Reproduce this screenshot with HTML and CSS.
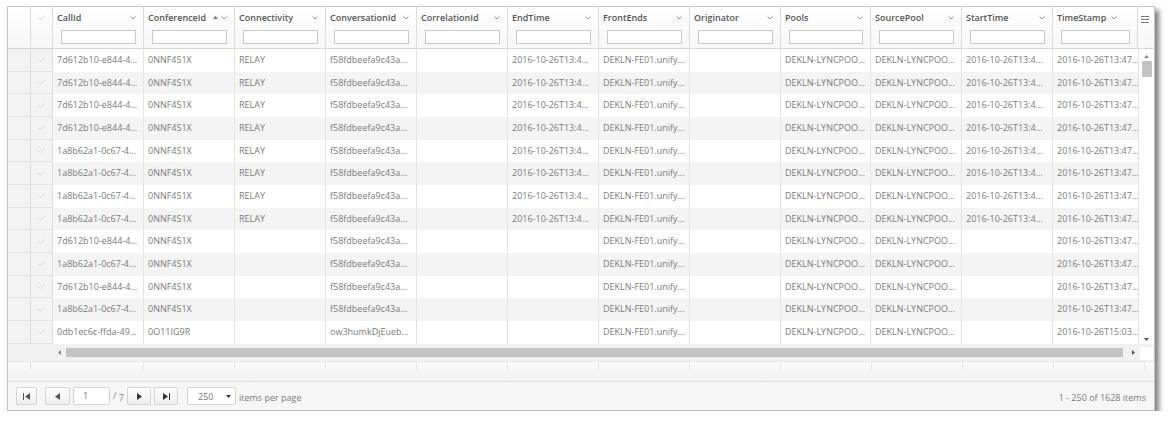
FILE: index.html
```html
<!DOCTYPE html>
<html>
    <head>
        <meta charset="UTF-8">
        <title>Calls</title>
        <link rel="stylesheet" href="styles.css">
    </head>
    <body>
        <div class="grid">
            <div class="head">
                <div class="lock1"></div>
                <div class="lock2">
                    <svg class="check" width="7" height="5" viewBox="0 0 7 5"><path d="M.5 2.5 2.5 4.5 6.5 .5" fill="none" stroke="#d2d2d2"/></svg>
                </div>
                <div class="hcol"><div class="title"><span>CallId</span><svg class="chev" width="6" height="4" viewBox="0 0 6 4"><path d="M.5 .5 3 3 5.5 .5" fill="none" stroke="#999"/></svg></div><div class="filter"><input type="text"></div></div>
                <div class="hcol"><div class="title"><span>ConferenceId</span><span class="tools"><svg class="sort" width="5" height="3" viewBox="0 0 5 3"><path d="M0 3 2.5 0 5 3z" fill="#777"/></svg><svg class="chev" width="6" height="4" viewBox="0 0 6 4"><path d="M.5 .5 3 3 5.5 .5" fill="none" stroke="#999"/></svg></span></div><div class="filter"><input type="text"></div></div>
                <div class="hcol"><div class="title"><span>Connectivity</span><svg class="chev" width="6" height="4" viewBox="0 0 6 4"><path d="M.5 .5 3 3 5.5 .5" fill="none" stroke="#999"/></svg></div><div class="filter"><input type="text"></div></div>
                <div class="hcol"><div class="title"><span>ConversationId</span><svg class="chev" width="6" height="4" viewBox="0 0 6 4"><path d="M.5 .5 3 3 5.5 .5" fill="none" stroke="#999"/></svg></div><div class="filter"><input type="text"></div></div>
                <div class="hcol"><div class="title"><span>CorrelationId</span><svg class="chev" width="6" height="4" viewBox="0 0 6 4"><path d="M.5 .5 3 3 5.5 .5" fill="none" stroke="#999"/></svg></div><div class="filter"><input type="text"></div></div>
                <div class="hcol"><div class="title"><span>EndTime</span><svg class="chev" width="6" height="4" viewBox="0 0 6 4"><path d="M.5 .5 3 3 5.5 .5" fill="none" stroke="#999"/></svg></div><div class="filter"><input type="text"></div></div>
                <div class="hcol"><div class="title"><span>FrontEnds</span><svg class="chev" width="6" height="4" viewBox="0 0 6 4"><path d="M.5 .5 3 3 5.5 .5" fill="none" stroke="#999"/></svg></div><div class="filter"><input type="text"></div></div>
                <div class="hcol"><div class="title"><span>Originator</span><svg class="chev" width="6" height="4" viewBox="0 0 6 4"><path d="M.5 .5 3 3 5.5 .5" fill="none" stroke="#999"/></svg></div><div class="filter"><input type="text"></div></div>
                <div class="hcol pools"><div class="title"><span>Pools</span><svg class="chev" width="6" height="4" viewBox="0 0 6 4"><path d="M.5 .5 3 3 5.5 .5" fill="none" stroke="#999"/></svg></div><div class="filter"><input type="text"></div></div>
                <div class="hcol"><div class="title"><span>SourcePool</span><svg class="chev" width="6" height="4" viewBox="0 0 6 4"><path d="M.5 .5 3 3 5.5 .5" fill="none" stroke="#999"/></svg></div><div class="filter"><input type="text"></div></div>
                <div class="hcol"><div class="title"><span>StartTime</span><svg class="chev" width="6" height="4" viewBox="0 0 6 4"><path d="M.5 .5 3 3 5.5 .5" fill="none" stroke="#999"/></svg></div><div class="filter"><input type="text"></div></div>
                <div class="hcol stamp"><div class="title inline"><span>TimeStamp</span><svg class="chev" width="6" height="4" viewBox="0 0 6 4"><path d="M.5 .5 3 3 5.5 .5" fill="none" stroke="#999"/></svg></div><div class="filter"><input type="text"></div></div>
                <div class="hmenu">
                    <svg width="8" height="7" viewBox="0 0 8 7"><path d="M0 .5h8M0 3.5h8M0 6.5h8" stroke="#777"/></svg>
                </div>
            </div>

            <div class="body">
                <div class="rows" id="rows"></div>
                <div class="vscroll">
                    <svg class="arr" width="5" height="3" viewBox="0 0 5 3"><path d="M0 3 2.5 0 5 3z" fill="#888"/></svg>
                    <div class="vthumb"></div>
                    <div class="vspace"></div>
                    <svg class="arr" width="5" height="3" viewBox="0 0 5 3"><path d="M0 0 2.5 3 5 0z" fill="#555"/></svg>
                </div>
            </div>

            <div class="hscroll">
                <div class="hlock"></div>
                <div class="htrack">
                    <svg class="arr" width="3" height="5" viewBox="0 0 3 5"><path d="M3 0 0 2.5 3 5z" fill="#888"/></svg>
                    <div class="hthumb"></div>
                    <svg class="arr" width="3" height="5" viewBox="0 0 3 5"><path d="M0 0 3 2.5 0 5z" fill="#555"/></svg>
                </div>
                <div class="corner"><div class="square"></div></div>
            </div>

            <div class="foot" id="foot"></div>

            <div class="pager">
                <span class="pbtn first"><svg width="7" height="7" viewBox="0 0 7 7"><path d="M.5 0v7" stroke="#555"/><path d="M7 0 2 3.5 7 7z" fill="#555"/></svg></span>
                <span class="pbtn prev"><svg width="5" height="7" viewBox="0 0 5 7"><path d="M5 0 0 3.5 5 7z" fill="#555"/></svg></span>
                <span class="pinput">1</span>
                <span class="pof">/ <sub>7</sub></span>
                <span class="pbtn next"><svg width="5" height="7" viewBox="0 0 5 7"><path d="M0 0 5 3.5 0 7z" fill="#333"/></svg></span>
                <span class="pbtn last"><svg width="7" height="7" viewBox="0 0 7 7"><path d="M0 0 5 3.5 0 7z" fill="#333"/><path d="M6.5 0v7" stroke="#333"/></svg></span>
                <span class="psize">250<svg width="5" height="3" viewBox="0 0 5 3"><path d="M0 0 2.5 3 5 0z" fill="#333"/></svg></span>
                <span class="plabel">items per page</span>
                <span class="pinfo">1 - 250 of 1628 items</span>
            </div>
        </div>

        <script type="text/javascript">
            var a = '7d612b10-e844-4…', b = '1a8b62a1-0c67-4…';
            var f = 'f58fdbeefa9c43a…', e = '2016-10-26T13:4…', fe = 'DEKLN-FE01.unify…';
            var p = 'DEKLN-LYNCPOO…', t = '2016-10-26T13:47…';

            function full(id) { return [id, '0NNF4S1X', 'RELAY', f, '', e, fe, '', p, p, e, t]; }
            function part(id) { return [id, '0NNF4S1X', '', f, '', '', fe, '', p, p, '', t]; }

            var data = [full(a), full(a), full(a), full(a), full(b), full(b), full(b), full(b),
                part(a), part(b), part(a), part(b),
                ['0db1ec6c-ffda-49…', '0O11IG9R', '', 'ow3humkDjEueb…', '', '', fe, '', p, p, '', '2016-10-26T15:03…']];

            var check = '<svg width="7" height="5" viewBox="0 0 7 5"><path d="M.5 2.5 2.5 4.5 6.5 .5" fill="none" stroke="#d2d2d2"/></svg>';
            var html = '';
            for (var i = 0; i < data.length; i++) {
                html += '<div class="row' + (i % 2 ? ' alt' : '') + '"><div class="lock1"></div><div class="lock2">' + check + '</div>';
                for (var j = 0; j < data[i].length; j++) {
                    var cls = j == 8 ? ' pools' : (j == 11 ? ' stamp' : '');
                    html += '<div class="cell' + cls + '">' + data[i][j] + '</div>';
                }
                html += '</div>';
            }
            document.getElementById('rows').innerHTML = html;

            var foot = '<div class="lock1"></div><div class="lock2"></div>';
            for (var k = 0; k < 12; k++) {
                foot += '<div class="cell' + (k == 8 ? ' pools' : (k == 11 ? ' stamp' : '')) + '"></div>';
            }
            document.getElementById('foot').innerHTML = foot;
        </script>
    </body>
</html>
```

FILE: styles.css
```css
*{
    box-sizing: border-box;
}
body{
    margin: 0;
    background: #fff;
    font-family: "Open Sans", "Liberation Sans", sans-serif;
    font-size: 9px;
    color: #7a7a7a;
}
.grid{
    margin: 6px 0 0 7px;
    width: 1148px;
    height: 405px;
    border: 1px solid #c4c4c4;
    box-shadow: 4px 4px 5px rgba(0,0,0,.5);
    display: flex;
    flex-direction: column;
    background: #fff;
    overflow: hidden;
}

/* header */
.head{
    display: flex;
    height: 42px;
    flex-shrink: 0;
    border-bottom: 1px solid #d6d6d6;
    background: linear-gradient(#fff, #f7f7f7);
}
.lock1{
    width: 23px;
    flex-shrink: 0;
    border-right: 1px solid #dcdcdc;
}
.lock2{
    width: 22px;
    flex-shrink: 0;
    border-right: 1px solid #dcdcdc;
    display: flex;
    justify-content: center;
}
.head .lock2{
    padding-top: 8px;
}
.hcol{
    width: 91px;
    flex-shrink: 0;
    border-right: 1px solid #dcdcdc;
    display: flex;
    flex-direction: column;
}
.pools{
    width: 90px;
}
.stamp{
    width: 85px;
}
.title{
    height: 20px;
    display: flex;
    align-items: center;
    justify-content: space-between;
    padding: 1px 7px 0 4px;
    font-weight: 600;
    color: #555;
    white-space: nowrap;
}
.title.inline{
    justify-content: flex-start;
}
.title.inline .chev{
    margin-left: 5px;
}
.tools{
    display: flex;
    align-items: center;
}
.sort{
    margin-right: 3px;
}
.filter{
    padding: 3px 7px 0 8px;
}
.filter input{
    display: block;
    width: 100%;
    height: 14px;
    margin: 0;
    padding: 0;
    border: 1px solid #c8c8c8;
    background: #fff;
}
.hmenu{
    width: 16px;
    flex-shrink: 0;
    padding: 6px 0 0 3px;
}

/* body */
.body{
    display: flex;
    height: 295px;
    flex-shrink: 0;
}
.rows{
    width: 1130px;
}
.row{
    display: flex;
    height: 22.67px;
    line-height: 22.67px;
    background: #fff;
}
.row.alt{
    background: #f4f4f4;
}
.row .lock1,
.row .lock2{
    background: #f3f3f3;
    border-bottom: 1px solid #e2e2e2;
}
.row .lock2{
    align-items: center;
}
.cell{
    width: 91px;
    flex-shrink: 0;
    padding-left: 4px;
    border-right: 1px solid #e4e4e4;
    white-space: nowrap;
    overflow: hidden;
}
.row .pools{
    width: 90px;
}
.row .stamp{
    width: 85px;
    border-right: 0;
}
.vscroll{
    width: 16px;
    flex-shrink: 0;
    display: flex;
    flex-direction: column;
    align-items: center;
    padding: 6px 0 3px;
    border-left: 1px solid #e4e4e4;
}
.vthumb{
    width: 10px;
    height: 16px;
    margin-top: 3px;
    margin-left: 1px;
    background: #c3c3c3;
}
.vspace{
    flex: 1;
}

/* horizontal scroll */
.hscroll{
    display: flex;
    height: 17px;
    flex-shrink: 0;
    background: #f1f1f1;
}
.hlock{
    width: 45px;
}
.htrack{
    flex: 1;
    display: flex;
    align-items: center;
    padding: 0 3px 0 5px;
}
.hthumb{
    flex: 1;
    height: 9px;
    margin: 0 9px 0 5px;
    background: #c3c3c3;
}
.corner{
    width: 16px;
    padding: 3px 1px 0 2px;
}
.square{
    height: 13px;
    background: #fff;
}

/* footer */
.foot{
    display: flex;
    height: 21px;
    flex-shrink: 0;
    border-top: 1px solid #e8e8e8;
    border-bottom: 1px solid #dcdcdc;
    background: linear-gradient(#fbfbfb, #f2f2f2);
}
.foot .lock1,
.foot .lock2,
.foot .cell{
    height: 7px;
}
.foot .lock2{
    border-right: 0;
}

/* pager */
.pager{
    flex: 1;
    display: flex;
    align-items: center;
    padding: 0 8px;
    background: #f6f6f6;
    color: #7a7a7a;
}
.pbtn{
    height: 18px;
    width: 24px;
    display: flex;
    align-items: center;
    justify-content: center;
    border: 1px solid #d2d2d2;
    border-radius: 2px;
    background: linear-gradient(#fff, #eee);
}
.first{
    width: 21px;
}
.prev{
    width: 25px;
    margin-left: 8px;
}
.pinput{
    width: 37px;
    height: 18px;
    margin-left: 3px;
    padding-left: 9px;
    line-height: 16px;
    border: 1px solid #d2d2d2;
    border-radius: 2px;
    background: #fff;
    color: #777;
}
.pof{
    width: 17px;
    padding-left: 3px;
    color: #888;
}
.pof sub{
    font-size: 9px;
    vertical-align: -2px;
}
.last{
    margin-left: 3px;
}
.psize{
    width: 49px;
    height: 18px;
    margin-left: 9px;
    display: flex;
    align-items: center;
    justify-content: space-between;
    padding: 0 4px 0 10px;
    border: 1px solid #d2d2d2;
    border-radius: 2px;
    background: #fff;
    color: #777;
}
.plabel{
    margin-left: 3px;
    padding-top: 2px;
}
.pinfo{
    margin-left: auto;
    padding-top: 2px;
}
```
